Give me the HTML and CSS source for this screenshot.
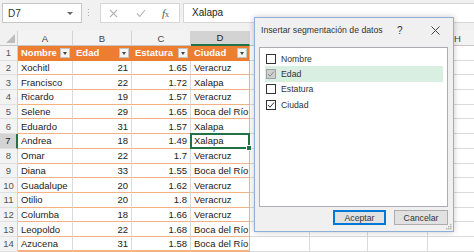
FILE: index.html
```html
<!DOCTYPE html>
<html lang="es">
  <head>
    <meta charset="UTF-8" />
    <meta name="viewport" content="width=device-width, initial-scale=1.0" />
    <title>Insertar segmentación de datos</title>
    <link rel="stylesheet" href="styles.css">
  </head>
  <body>
    <div class="topbar">
      <div class="namebox">
        <span>D7</span>
        <span class="caret"></span>
      </div>
      <div class="dots"><i></i><i></i><i></i></div>
      <div class="fxbox">
        <svg class="ico-cancel" width="9" height="9" viewBox="0 0 9 9"><path d="M1 1L8 8M8 1L1 8" stroke="#b4b4b4" stroke-width="1.1" fill="none"/></svg>
        <svg class="ico-enter" width="10" height="9" viewBox="0 0 10 9"><path d="M1 4.5L3.8 7.5L9 1" stroke="#b4b4b4" stroke-width="1.1" fill="none"/></svg>
        <span class="fx"><i>f</i><small>x</small></span>
      </div>
      <div class="formula">Xalapa</div>
    </div>

    <div class="sheet" id="sheet"></div>

    <div class="dialog">
      <div class="dialog-title">
        <span class="title-text">Insertar segmentación de datos</span>
        <span class="help">?</span>
        <svg class="close" width="9" height="9" viewBox="0 0 9 9"><path d="M0.5 0.5L8.5 8.5M8.5 0.5L0.5 8.5" stroke="#444" stroke-width="1" fill="none"/></svg>
      </div>
      <div class="field-list">
        <div class="field"><span class="check"></span>Nombre</div>
        <div class="field focused"><span class="check disabled"><svg width="8" height="8" viewBox="0 0 8 8"><path d="M1 4L3 6.2L7 1.5" stroke="#8c8c8c" stroke-width="1" fill="none"/></svg></span>Edad</div>
        <div class="field"><span class="check"></span>Estatura</div>
        <div class="field"><span class="check"><svg width="8" height="8" viewBox="0 0 8 8"><path d="M1 4L3 6.2L7 1.5" stroke="#333" stroke-width="1" fill="none"/></svg></span>Ciudad</div>
      </div>
      <div class="dialog-buttons">
        <button class="btn primary">Aceptar</button>
        <button class="btn">Cancelar</button>
      </div>
      <svg class="grip" width="6" height="6" viewBox="0 0 6 6"><rect x="4" y="0" width="1.5" height="1.5" fill="#b8b8b8"/><rect x="2" y="2" width="1.5" height="1.5" fill="#b8b8b8"/><rect x="4" y="2" width="1.5" height="1.5" fill="#b8b8b8"/><rect x="0" y="4" width="1.5" height="1.5" fill="#b8b8b8"/><rect x="2" y="4" width="1.5" height="1.5" fill="#b8b8b8"/><rect x="4" y="4" width="1.5" height="1.5" fill="#b8b8b8"/></svg>
    </div>

    <script>
      // E, F and G sit under the dialog
      const columns = ['A', 'B', 'C', 'D', '', '', '', 'H'];
      const headers = ['Nombre', 'Edad', 'Estatura', 'Ciudad'];
      const rows = [
        ['Xochitl', 21, '1.65', 'Veracruz'],
        ['Francisco', 22, '1.72', 'Xalapa'],
        ['Ricardo', 19, '1.57', 'Veracruz'],
        ['Selene', 29, '1.65', 'Boca del Río'],
        ['Eduardo', 31, '1.57', 'Xalapa'],
        ['Andrea', 18, '1.49', 'Xalapa'],
        ['Omar', 22, '1.7', 'Veracruz'],
        ['Diana', 33, '1.55', 'Boca del Río'],
        ['Guadalupe', 20, '1.62', 'Veracruz'],
        ['Otilio', 20, '1.8', 'Veracruz'],
        ['Columba', 18, '1.66', 'Veracruz'],
        ['Leopoldo', 22, '1.68', 'Boca del Río'],
        ['Azucena', 31, '1.58', 'Boca del Río'],
      ];

      const sheet = document.getElementById('sheet');

      function cell(className, text) {
        const el = document.createElement('div');
        el.className = className;
        if (text !== undefined) el.textContent = text;
        sheet.appendChild(el);
        return el;
      }

      // column letters
      cell('corner');
      columns.forEach(col => {
        cell(col === 'D' ? 'col-head active' : 'col-head', col);
      });

      // table header
      cell('row-head', 1);
      headers.forEach((h, i) => {
        const el = cell('cell th' + (i === 3 ? ' last' : ''), h);
        const btn = document.createElement('span');
        btn.className = 'filter';
        el.appendChild(btn);
      });
      for (let i = 4; i < columns.length; i++) cell('cell');

      // data rows
      rows.forEach((r, idx) => {
        const n = idx + 2;
        cell(n === 7 ? 'row-head active' : 'row-head', n);
        const bottom = idx === rows.length - 1 ? ' bottom' : '';
        cell('cell td' + bottom, r[0]);
        cell('cell td num' + bottom, r[1]);
        cell('cell td num' + bottom, r[2]);
        cell('cell td last' + bottom + (n === 7 ? ' active-cell' : ''), r[3]);
        for (let i = 4; i < columns.length; i++) cell('cell');
      });
    </script>
  </body>
</html>
```

FILE: styles.css
```css
body {
  margin: 0;
  padding: 0;
  width: 474px;
  height: 252px;
  overflow: hidden;
  position: relative;
  background: #fff;
  font-family: "Liberation Sans", Arial, sans-serif;
  color: #222;
}

/* formula bar */

.topbar {
  box-sizing: border-box;
  height: 31px;
  padding: 3px 0 0 2px;
  background: #f1f1f1;
  display: flex;
  align-items: flex-start;
}

.namebox {
  box-sizing: border-box;
  width: 80px;
  height: 20px;
  background: #fff;
  border: 1px solid #c6c6c6;
  display: flex;
  align-items: center;
  justify-content: space-between;
  padding: 0 8px 0 5px;
  font-size: 10px;
  color: #333;
}

.caret {
  width: 0;
  height: 0;
  border-left: 3px solid transparent;
  border-right: 3px solid transparent;
  border-top: 3px solid #666;
}

.dots {
  margin: 6px 10px 0 5px;
  width: 3px;
  display: flex;
  flex-direction: column;
  align-items: center;
  gap: 2px;
}

.dots i {
  width: 1px;
  height: 1px;
  background: #b0b0b0;
}

.fxbox {
  box-sizing: border-box;
  width: 80px;
  height: 20px;
  background: #fff;
  border: 1px solid #d6d6d6;
  display: flex;
  align-items: center;
  padding-left: 8px;
}

.ico-enter {
  margin-left: 18px;
}

.fx {
  margin-left: 16px;
  font-family: "Liberation Serif", serif;
  font-size: 11px;
  color: #555;
}

.fx small {
  font-size: 8px;
}

.formula {
  box-sizing: border-box;
  flex: 1;
  margin-left: 3px;
  height: 20px;
  background: #fff;
  border: 1px solid #d6d6d6;
  border-right: none;
  padding-left: 8px;
  font-size: 10px;
  line-height: 18px;
  color: #222;
}

/* grid */

.sheet {
  display: grid;
  grid-template-columns: 18px 55px 59px 59px 59px 60px 58px 60px 60px;
  grid-template-rows: 15px;
  grid-auto-rows: 14.7px;
  font-size: 9.5px;
}

.corner {
  background: #f1f1f1;
  border-right: 1px solid #d0d0d0;
  border-bottom: 1px solid #c6c6c6;
  position: relative;
}

.corner::after {
  content: "";
  position: absolute;
  right: 2px;
  bottom: 2px;
  border-left: 9px solid transparent;
  border-bottom: 9px solid #bdbdbd;
}

.col-head {
  background: #f3f3f3;
  border-right: 1px solid #d4d4d4;
  border-bottom: 1px solid #c6c6c6;
  display: flex;
  align-items: center;
  justify-content: center;
  color: #444;
}

.col-head.active {
  background: #d3d3d3;
  border-bottom: 2px solid #217346;
  color: #222;
}

.row-head {
  background: #f3f3f3;
  border-right: 1px solid #d0d0d0;
  border-bottom: 1px solid #e0e0e0;
  display: flex;
  align-items: center;
  justify-content: center;
  color: #555;
}

.row-head.active {
  background: #d3d3d3;
  border-right: 2px solid #217346;
  color: #222;
}

.cell {
  box-sizing: border-box;
  border-right: 1px solid #dadada;
  border-bottom: 1px solid #dadada;
  padding: 0 3px;
  display: flex;
  align-items: center;
  white-space: nowrap;
  overflow: hidden;
}

.th {
  background: #ed7d31;
  color: #fff;
  font-weight: bold;
  border-right-color: #ed7d31;
  border-bottom-color: #ed7d31;
  position: relative;
}

.filter {
  position: absolute;
  right: 2px;
  top: 2px;
  box-sizing: border-box;
  width: 10px;
  height: 10px;
  background: #f4f4f4;
  border: 1px solid #c4c4c4;
}

.filter::after {
  content: "";
  position: absolute;
  left: 2px;
  top: 3px;
  border-left: 2.5px solid transparent;
  border-right: 2.5px solid transparent;
  border-top: 3px solid #444;
}

.td {
  border-bottom-color: #f4b183;
}

.num {
  justify-content: flex-end;
}

.last {
  border-right-color: #f4b183;
}

.bottom {
  border-bottom: 2px solid #f4b183;
}

.active-cell {
  position: relative;
  overflow: visible;
}

.active-cell::before {
  content: "";
  position: absolute;
  left: -1px;
  top: -1px;
  right: -1px;
  bottom: -1px;
  border: 2px solid #217346;
}

.active-cell::after {
  content: "";
  position: absolute;
  right: -3px;
  bottom: -3px;
  width: 4px;
  height: 4px;
  background: #217346;
  border: 1px solid #fff;
}

/* dialog */

.dialog {
  position: absolute;
  left: 254px;
  top: 17px;
  width: 200px;
  height: 215px;
  box-sizing: border-box;
  background: #f0f0f0;
  border: 1px solid #8fb0d6;
  box-shadow: 0 0 6px rgba(0, 0, 0, 0.22);
  font-size: 8.7px;
  color: #333;
}

.dialog-title {
  height: 24px;
  display: flex;
  align-items: center;
  padding-left: 6px;
}

.title-text {
  flex: 1;
}

.help {
  font-size: 10px;
  width: 34px;
}

.close {
  margin-right: 13px;
}

.field-list {
  box-sizing: border-box;
  height: 160px;
  margin: 5px 5px 0 4px;
  background: #fff;
  border: 1px solid #abadb3;
  padding: 3px 4px 0 5px;
}

.field {
  height: 15.4px;
  display: flex;
  align-items: center;
  padding-left: 1px;
  gap: 5px;
}

.field.focused {
  background: #d9efe2;
}

.check {
  box-sizing: border-box;
  width: 10px;
  height: 10px;
  border: 1px solid #333;
  background: #fff;
  display: flex;
  align-items: center;
  justify-content: center;
}

.check.disabled {
  background: #cfcfcf;
  border-color: #a0a0a0;
}

.dialog-buttons {
  display: flex;
  justify-content: flex-end;
  gap: 8px;
  margin: 3px 5px 0 0;
}

.btn {
  box-sizing: border-box;
  width: 54px;
  height: 15px;
  padding: 0;
  background: #e1e1e1;
  border: 1px solid #adadad;
  font-family: "Liberation Sans", Arial, sans-serif;
  font-size: 8.7px;
  color: #333;
}

.btn.primary {
  width: 53px;
  border-color: #0078d7;
  box-shadow: inset 0 0 0 1px #0078d7;
}

.grip {
  position: absolute;
  right: 1px;
  bottom: 1px;
}
```
